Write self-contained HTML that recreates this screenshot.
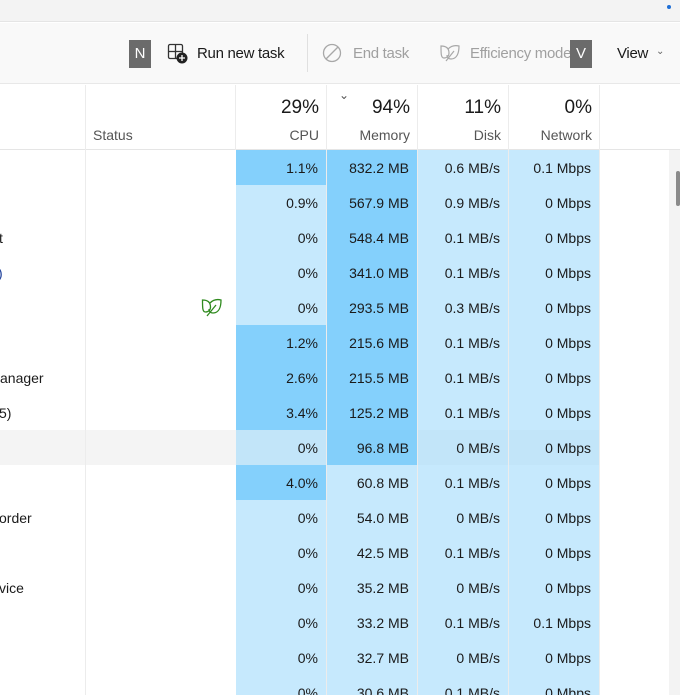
<!DOCTYPE html>
<html><head><meta charset="utf-8"><style>
*{margin:0;padding:0;box-sizing:border-box}
html,body{width:680px;height:695px;overflow:hidden}
body{background:#fff;font-family:"Liberation Sans",sans-serif;color:#1a1a1a;font-size:14px}
#w{position:relative;width:680px;height:695px;overflow:hidden}
.top{position:absolute;left:0;top:0;width:680px;height:22px;background:#f3f3f3;border-bottom:1px solid #e5e5e5}
.dot{position:absolute;left:667px;top:5px;width:4px;height:4px;border-radius:2px;background:#1f6fd6}
.tb{position:absolute;left:0;top:23px;width:680px;height:61px;background:#f9f9f9;border-bottom:1px solid #e8e8e8}
.t{position:absolute;top:45px;font-size:15px;letter-spacing:-0.3px}
.gray{color:#a0a0a0}
.badge{position:absolute;top:40px;width:22px;height:28px;background:#6b6b6b;color:#fff;font-size:15px;text-align:center;line-height:28px}
.hdr{position:absolute;top:85px;left:0;width:680px;height:65px;border-bottom:1px solid #e5e5e5}
.vl{position:absolute;top:85px;width:1px;height:610px;background:#ececec}
.h1{position:absolute;top:97px;font-size:19px;text-align:right}
.h2{position:absolute;top:127px;font-size:14px;color:#555;text-align:right}
.row{position:absolute;left:0;width:600px;height:35px}
.c{position:absolute;top:0;height:35px;line-height:36px;text-align:right;padding-right:8px;font-size:14px}
.D{background:#84d0fc}.L{background:#c6e9fd}
.nm{position:absolute;left:0;line-height:36px;font-size:14px}
</style></head><body><div id="w">
<div class="top"><div class="dot"></div></div>
<div class="tb"></div>
<div class="badge" style="left:129px">N</div>
<svg style="position:absolute;left:167px;top:43px" width="22" height="22" viewBox="0 0 22 22" fill="none" stroke="#333" stroke-width="1.3"><rect x="1.5" y="1.5" width="14" height="14" rx="1.5"/><line x1="8.5" y1="1.5" x2="8.5" y2="15.5"/><line x1="1.5" y1="8.5" x2="15.5" y2="8.5"/><circle cx="15" cy="15" r="5.5" fill="#222" stroke="none"/><path d="M15 12v6M12 15h6" stroke="#fff"/></svg>
<div class="t" style="left:197px">Run new task</div>
<div style="position:absolute;left:307px;top:34px;width:1px;height:38px;background:#e0e0e0"></div>
<svg style="position:absolute;left:322px;top:43px" width="20" height="20" viewBox="0 0 20 20" fill="none" stroke="#a8a8a8" stroke-width="1.3"><circle cx="10" cy="10" r="8.5"/><line x1="4" y1="16" x2="16" y2="4"/></svg>
<div class="t gray" style="left:353px">End task</div>
<svg style="position:absolute;left:439px;top:43px" width="22" height="20" viewBox="0 0 22 20" fill="none" stroke="#a8a8a8" stroke-width="1.2"><path d="M2 3c5 0 8 2 8 7 0 3-2 5-5 5-3 0-3-4-3-12z"/><path d="M9 6c3-3 7-4 11-3 0 7-2 13-8 13-3 0-4-2-4-4"/><path d="M7 18l8-10"/></svg>
<div class="t gray" style="left:470px">Efficiency mode</div>
<div class="badge" style="left:570px">V</div>
<div class="t" style="left:617px">View</div>
<div style="position:absolute;left:656px;top:46px;font-size:10px;color:#666">&#8964;</div>

<div class="hdr"></div>
<div class="h2" style="left:93px;text-align:left">Status</div>
<div class="h1" style="left:236px;width:83px">29%</div><div class="h2" style="left:236px;width:83px">CPU</div>
<div style="position:absolute;left:339px;top:88px;font-size:12px;color:#555">&#8964;</div>
<div class="h1" style="left:327px;width:83px">94%</div><div class="h2" style="left:327px;width:83px">Memory</div>
<div class="h1" style="left:418px;width:83px">11%</div><div class="h2" style="left:418px;width:83px">Disk</div>
<div class="h1" style="left:509px;width:83px">0%</div><div class="h2" style="left:509px;width:83px">Network</div>

<div style="position:absolute;left:0;top:430px;width:236px;height:35px;background:#f4f4f4"></div>

<div class="row" style="top:150px"><div class="c D" style="left:236px;width:90px">1.1%</div><div class="c D" style="left:327px;width:90px">832.2 MB</div><div class="c L" style="left:418px;width:90px">0.6 MB/s</div><div class="c L" style="left:509px;width:90px">0.1 Mbps</div></div>
<div class="row" style="top:185px"><div class="c L" style="left:236px;width:90px">0.9%</div><div class="c D" style="left:327px;width:90px">567.9 MB</div><div class="c L" style="left:418px;width:90px">0.9 MB/s</div><div class="c L" style="left:509px;width:90px">0 Mbps</div></div>
<div class="row" style="top:220px"><div class="nm" style="left:-1px">t</div><div class="c L" style="left:236px;width:90px">0%</div><div class="c D" style="left:327px;width:90px">548.4 MB</div><div class="c L" style="left:418px;width:90px">0.1 MB/s</div><div class="c L" style="left:509px;width:90px">0 Mbps</div></div>
<div class="row" style="top:255px"><div class="nm" style="left:-2px;color:#1d3f9a">)</div><div class="c L" style="left:236px;width:90px">0%</div><div class="c D" style="left:327px;width:90px">341.0 MB</div><div class="c L" style="left:418px;width:90px">0.1 MB/s</div><div class="c L" style="left:509px;width:90px">0 Mbps</div></div>
<div class="row" style="top:290px"><svg style="position:absolute;left:201px;top:8px" width="22" height="19" viewBox="0 0 22 19" fill="none" stroke="#2f8a1e" stroke-width="1.3"><path d="M1.5 2c5 0 8 2 8 7 0 3-2 5-5 5-3 0-3-4-3-12z"/><path d="M9 5c3-3 7-4 11-3 0 7-2 13-8 13-3 0-4-2-4-4"/><path d="M6 18l9-11"/></svg><div class="c L" style="left:236px;width:90px">0%</div><div class="c D" style="left:327px;width:90px">293.5 MB</div><div class="c L" style="left:418px;width:90px">0.3 MB/s</div><div class="c L" style="left:509px;width:90px">0 Mbps</div></div>
<div class="row" style="top:325px"><div class="c D" style="left:236px;width:90px">1.2%</div><div class="c D" style="left:327px;width:90px">215.6 MB</div><div class="c L" style="left:418px;width:90px">0.1 MB/s</div><div class="c L" style="left:509px;width:90px">0 Mbps</div></div>
<div class="row" style="top:360px"><div class="nm" style="left:0">anager</div><div class="c D" style="left:236px;width:90px">2.6%</div><div class="c D" style="left:327px;width:90px">215.5 MB</div><div class="c L" style="left:418px;width:90px">0.1 MB/s</div><div class="c L" style="left:509px;width:90px">0 Mbps</div></div>
<div class="row" style="top:395px"><div class="nm" style="left:-1px">5)</div><div class="c D" style="left:236px;width:90px">3.4%</div><div class="c D" style="left:327px;width:90px">125.2 MB</div><div class="c L" style="left:418px;width:90px">0.1 MB/s</div><div class="c L" style="left:509px;width:90px">0 Mbps</div></div>
<div class="row" style="top:430px"><div class="c" style="left:236px;width:90px;background:#c2e5f9">0%</div><div class="c" style="left:327px;width:90px;background:#83cffa">96.8 MB</div><div class="c" style="left:418px;width:90px;background:#c2e5f9">0 MB/s</div><div class="c" style="left:509px;width:90px;background:#c2e5f9">0 Mbps</div></div>
<div class="row" style="top:465px"><div class="c D" style="left:236px;width:90px">4.0%</div><div class="c L" style="left:327px;width:90px">60.8 MB</div><div class="c L" style="left:418px;width:90px">0.1 MB/s</div><div class="c L" style="left:509px;width:90px">0 Mbps</div></div>
<div class="row" style="top:500px"><div class="nm" style="left:-1px">order</div><div class="c L" style="left:236px;width:90px">0%</div><div class="c L" style="left:327px;width:90px">54.0 MB</div><div class="c L" style="left:418px;width:90px">0 MB/s</div><div class="c L" style="left:509px;width:90px">0 Mbps</div></div>
<div class="row" style="top:535px"><div class="c L" style="left:236px;width:90px">0%</div><div class="c L" style="left:327px;width:90px">42.5 MB</div><div class="c L" style="left:418px;width:90px">0.1 MB/s</div><div class="c L" style="left:509px;width:90px">0 Mbps</div></div>
<div class="row" style="top:570px"><div class="nm" style="left:-1px">vice</div><div class="c L" style="left:236px;width:90px">0%</div><div class="c L" style="left:327px;width:90px">35.2 MB</div><div class="c L" style="left:418px;width:90px">0 MB/s</div><div class="c L" style="left:509px;width:90px">0 Mbps</div></div>
<div class="row" style="top:605px"><div class="c L" style="left:236px;width:90px">0%</div><div class="c L" style="left:327px;width:90px">33.2 MB</div><div class="c L" style="left:418px;width:90px">0.1 MB/s</div><div class="c L" style="left:509px;width:90px">0.1 Mbps</div></div>
<div class="row" style="top:640px"><div class="c L" style="left:236px;width:90px">0%</div><div class="c L" style="left:327px;width:90px">32.7 MB</div><div class="c L" style="left:418px;width:90px">0 MB/s</div><div class="c L" style="left:509px;width:90px">0 Mbps</div></div>
<div class="row" style="top:675px"><div class="c L" style="left:236px;width:90px">0%</div><div class="c L" style="left:327px;width:90px">30.6 MB</div><div class="c L" style="left:418px;width:90px">0.1 MB/s</div><div class="c L" style="left:509px;width:90px">0 Mbps</div></div>

<div class="vl" style="left:85px"></div>
<div class="vl" style="left:235px;height:65px"></div>
<div class="vl" style="left:326px"></div>
<div class="vl" style="left:417px"></div>
<div class="vl" style="left:508px"></div>
<div class="vl" style="left:599px"></div>
<div style="position:absolute;left:669px;top:150px;width:11px;height:545px;background:#f3f3f3"></div>
<div style="position:absolute;left:676px;top:171px;width:4px;height:35px;background:#8a8a8a;border-radius:2px"></div>
</div></body></html>
